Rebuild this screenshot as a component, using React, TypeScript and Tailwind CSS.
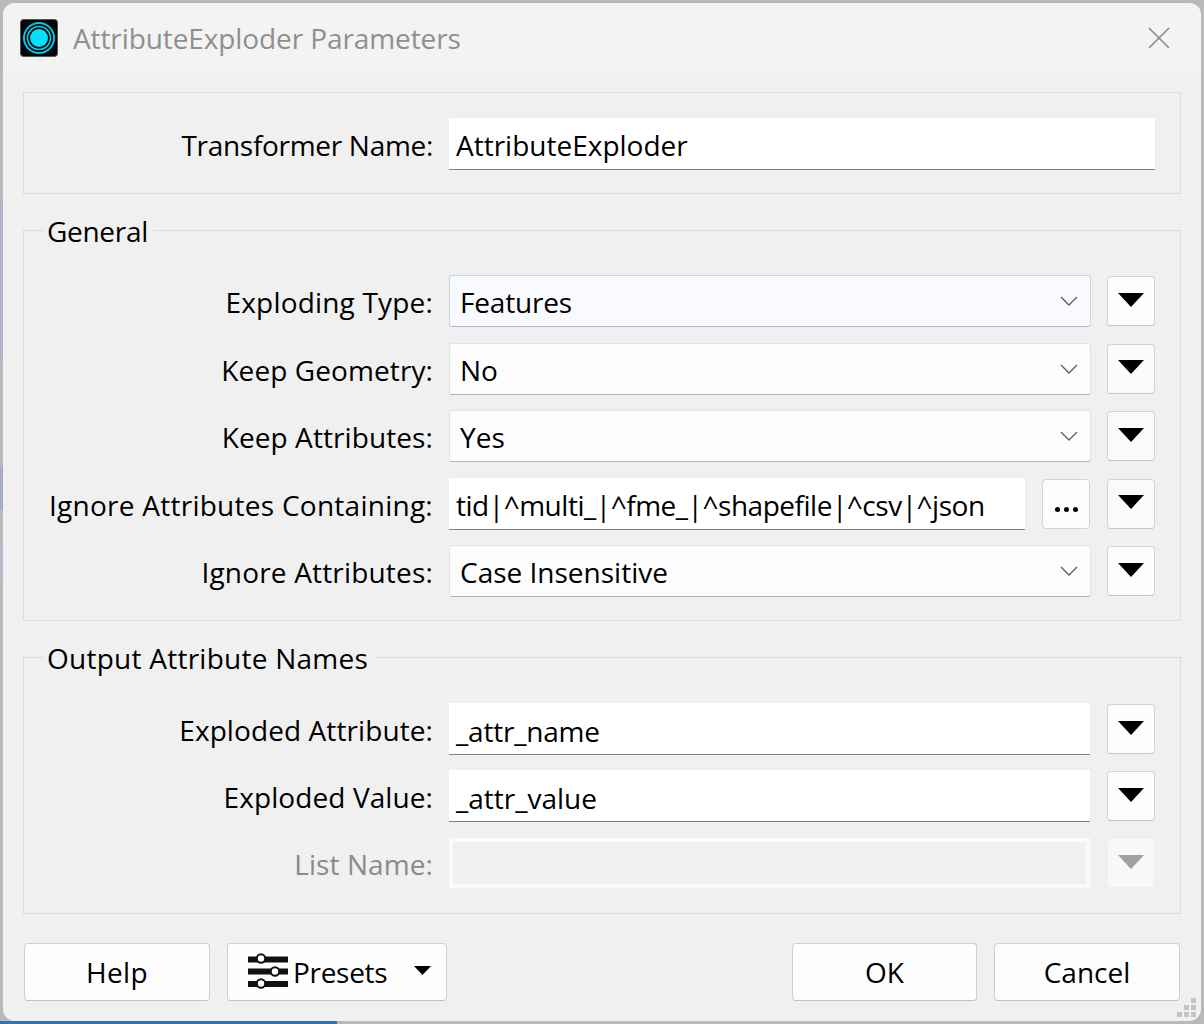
import React from "react";

const font = "font-['Open_Sans','Noto_Sans',sans-serif]";

function Tri({ disabled }: { disabled?: boolean }) {
  return (
    <svg width="26" height="14" viewBox="0 0 26 14" className="block">
      <polygon points="0,0 26,0 13,14" fill={disabled ? "#a0a0a0" : "#000"} />
    </svg>
  );
}

function MenuBtn({ tint = "bg-[#fdfdfd]", disabled }: { tint?: string; disabled?: boolean }) {
  return (
    <div
      className={`w-[48px] h-[50px] shrink-0 rounded-[4px] flex items-center justify-center pb-[3px] ${
        disabled ? "bg-[#f8f8f8] border border-[#f0f0f0]" : `${tint} border border-[#d4d4d4] border-b-[#c4c4c4]`
      }`}
    >
      <Tri disabled={disabled} />
    </div>
  );
}

function Label({ children, disabled, track = "tracking-[0.09px]" }: { children: React.ReactNode; disabled?: boolean; track?: string }) {
  return (
    <div className={`w-[410px] shrink-0 text-right pt-[2px] pr-[1px] ${track} ${disabled ? "text-[#8a8a8a]" : "text-black"}`}>
      {children}
    </div>
  );
}

function Combo({ value, tint, track = "" }: { value: string; tint?: boolean; track?: string }) {
  return (
    <div
      className={`w-[642px] h-[52px] ml-[15px] shrink-0 rounded-[3px] flex items-center pl-[10px] pr-[12px] border ${
        tint ? "bg-[#f8fafd] border-[#c9d6e2] border-b-[#a9bccd]" : "bg-[#fdfdfd] border-[#e2e2e2] border-b-[#b4b4b4]"
      }`}
    >
      <span className={`flex-1 pt-[2px] ${track}`}>{value}</span>
      <svg width="18" height="10" viewBox="0 0 18 10" fill="none" stroke="#606060" strokeWidth="1.4">
        <path d="M1 1l8 8 8-8" />
      </svg>
    </div>
  );
}

function TextIn({ value, w, track = "" }: { value: string; w: string; track?: string }) {
  return (
    <div className={`${w} h-[52px] ml-[15px] shrink-0 bg-white border-b border-[#808080] flex items-center pl-[7px] pt-[4px] ${track}`}>
      {value}
    </div>
  );
}

function Row({ label, children, disabled, track }: { label: string; children: React.ReactNode; disabled?: boolean; track?: string }) {
  return (
    <div className="flex items-center h-[52px]">
      <Label disabled={disabled} track={track}>{label}</Label>
      {children}
    </div>
  );
}

function Group({ title, legendW, track, className, children }: { title: string; legendW: string; track: string; className: string; children: React.ReactNode }) {
  return (
    <div className={`relative border border-[#dcdcdc] ${className}`}>
      <div className={`absolute left-[19px] top-[-20px] ${legendW} h-[40px] bg-[#f0f0f0] pl-[4px] leading-[40px] ${track}`}>{title}</div>
      {children}
    </div>
  );
}

function PushBtn({ children, w, className = "" }: { children: React.ReactNode; w: string; className?: string }) {
  return (
    <div className={`${w} h-[58px] rounded-[4px] bg-[#fdfdfd] border border-[#d0d0d0] border-b-[#c0c0c0] flex items-center justify-center ${className}`}>
      {children}
    </div>
  );
}

export default function App() {
  return (
    <div className={`w-[1204px] h-[1024px] bg-[#b9b9b9] overflow-hidden relative ${font} text-[28px] text-black`}>
      <div className="absolute left-0 w-[337px] bottom-0 h-[3px] bg-[#2f74b5]" />
      <div className="absolute left-0 top-[200px] w-[3px] h-[160px] bg-[#aeb4cc]" />
      <div className="absolute left-0 top-[467px] w-[3px] h-[43px] bg-[#a3acc9]" />
      <div className="absolute left-0 top-[548px] w-[3px] h-[37px] bg-[#b5b9c9]" />
      <div className="absolute left-[3px] top-[3px] w-[1198px] h-[1018px] bg-[#f0f0f0] rounded-[12px] overflow-hidden flex flex-col">
        <div className="h-[69px] shrink-0 bg-[#f3f3f3] flex items-center pl-[17px] pr-[31px]">
          <svg width="38" height="38" viewBox="0 0 38 38" className="shrink-0">
            <rect x="0.5" y="0.5" width="37" height="37" rx="3" fill="#050505" stroke="#555" />
            <circle cx="19" cy="19" r="15" fill="none" stroke="#00c8e8" strokeWidth="2" />
            <circle cx="19" cy="19" r="11.5" fill="none" stroke="#00d8f4" strokeWidth="1.5" />
            <circle cx="19" cy="19" r="9" fill="#00e0ff" />
          </svg>
          <div className="ml-[15px] flex-1 text-[#8f8f8f] tracking-[-0.1px]">AttributeExploder Parameters</div>
          <svg width="22" height="22" viewBox="0 0 22 22" stroke="#8a8a8a" strokeWidth="1.6">
            <path d="M1 1l20 20M21 1L1 21" />
          </svg>
        </div>

        <div className="flex-1 flex flex-col px-[20px] pt-[20px]">
          <div className="h-[102px] border border-[#dcdcdc] flex items-center pt-[1px]">
            <Label track="tracking-[-0.3px]">Transformer Name:</Label>
            <TextIn value="AttributeExploder" w="w-[706px]" />
          </div>

          <Group title="General" legendW="w-[110px]" track="tracking-[-0.3px]" className="mt-[36px] h-[391px] pt-[44px] flex flex-col gap-[15.5px]">
            <Row label="Exploding Type:" track="tracking-[0.18px]">
              <Combo value="Features" tint track="tracking-[-0.2px]" />
              <div className="ml-[16px]"><MenuBtn /></div>
            </Row>
            <Row label="Keep Geometry:">
              <Combo value="No" />
              <div className="ml-[16px]"><MenuBtn tint="bg-[#fbfbfb]" /></div>
            </Row>
            <Row label="Keep Attributes:">
              <Combo value="Yes" />
              <div className="ml-[16px]"><MenuBtn tint="bg-[#f9fafc]" /></div>
            </Row>
            <Row label="Ignore Attributes Containing:" track="tracking-[0.26px]">
              <TextIn value="tid|^multi_|^fme_|^shapefile|^csv|^json" w="w-[576px]" track="tracking-[-0.48px]" />
              <div className="ml-[17px] w-[48px] h-[50px] rounded-[4px] bg-[#fdfdfd] border border-[#d4d4d4] flex items-center justify-center pt-[12px] gap-[4px]">
                <span className="w-[5px] h-[5px] rounded-full bg-black" />
                <span className="w-[5px] h-[5px] rounded-full bg-black" />
                <span className="w-[5px] h-[5px] rounded-full bg-black" />
              </div>
              <div className="ml-[17px]"><MenuBtn tint="bg-[#f9fafc]" /></div>
            </Row>
            <Row label="Ignore Attributes:" track="tracking-[0.18px]">
              <Combo value="Case Insensitive" />
              <div className="ml-[16px]"><MenuBtn /></div>
            </Row>
          </Group>

          <Group title="Output Attribute Names" legendW="w-[332px]" track="tracking-[0.25px]" className="mt-[36px] h-[257px] pt-[45px] flex flex-col gap-[15px]">
            <Row label="Exploded Attribute:">
              <TextIn value="_attr_name" w="w-[641px]" track="tracking-[-0.2px]" />
              <div className="ml-[17px]"><MenuBtn /></div>
            </Row>
            <Row label="Exploded Value:">
              <TextIn value="_attr_value" w="w-[641px]" />
              <div className="ml-[17px]"><MenuBtn /></div>
            </Row>
            <Row label="List Name:" disabled>
              <div className="w-[641px] h-[50px] ml-[15px] shrink-0 border-[4px] border-[#fafafa] bg-[#f0f0f0]" />
              <div className="ml-[17px]"><MenuBtn disabled /></div>
            </Row>
          </Group>

          <div className="mt-[29px] flex items-center pl-[1px] pr-[1px]">
            <PushBtn w="w-[186px]" className="tracking-[0.4px]">Help</PushBtn>
            <PushBtn w="w-[220px]" className="ml-[17px] !justify-start pl-[19px] tracking-[-0.3px]">
              <svg width="42" height="38" viewBox="0 0 42 38" className="shrink-0">
                <g fill="#111">
                  <rect x="1" y="3.5" width="40" height="6" />
                  <rect x="1" y="15.5" width="40" height="6" />
                  <rect x="1" y="28" width="40" height="6" />
                </g>
                <g fill="#fff" stroke="#111" strokeWidth="2">
                  <circle cx="14" cy="5.5" r="4.2" />
                  <circle cx="28" cy="18.5" r="4.2" />
                  <circle cx="14" cy="30.5" r="4.2" />
                </g>
              </svg>
              <span className="ml-[4px]">Presets</span>
              <svg width="17" height="9" viewBox="0 0 17 9" className="ml-[27px] mb-[4px]">
                <polygon points="0,0 17,0 8.5,9" fill="#000" />
              </svg>
            </PushBtn>
            <div className="flex-1" />
            <PushBtn w="w-[185px]">OK</PushBtn>
            <PushBtn w="w-[186px]" className="ml-[17px]">Cancel</PushBtn>
          </div>
        </div>

        <svg width="24" height="24" viewBox="0 0 24 24" className="absolute right-[2px] bottom-[1px]" fill="#c4c4c4">
          <rect x="16" y="2" width="5" height="5" />
          <rect x="9" y="9" width="5" height="5" />
          <rect x="16" y="9" width="5" height="5" />
          <rect x="2" y="16" width="5" height="5" />
          <rect x="9" y="16" width="5" height="5" />
          <rect x="16" y="16" width="5" height="5" />
        </svg>
      </div>
    </div>
  );
}
